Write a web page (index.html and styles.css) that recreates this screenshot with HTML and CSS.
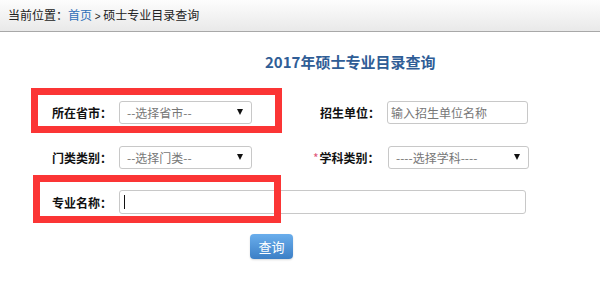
FILE: index.html
```html
<!DOCTYPE html>
<html lang="zh">
<head>
<meta charset="utf-8">
<link rel="stylesheet" href="styles.css">
</head>
<body>
<div class="crumb">当前位置：<span class="link">首页</span> <span class="gt">&gt;</span> 硕士专业目录查询</div>
<h1 class="title">2017年硕士专业目录查询</h1>
<div class="form">
  <div class="row">
    <div class="label">所在省市：</div>
    <div class="select"><span>--选择省市--</span><i class="arrow"></i></div>
    <div class="gap"></div>
    <div class="label">招生单位：</div>
    <div class="input ph">输入招生单位名称</div>
  </div>
  <div class="row">
    <div class="label">门类类别：</div>
    <div class="select"><span>--选择门类--</span><i class="arrow"></i></div>
    <div class="gap"></div>
    <div class="label star-label"><span class="star">*</span>学科类别：</div>
    <div class="select wide"><span>----选择学科----</span><i class="arrow"></i></div>
  </div>
  <div class="row">
    <div class="label">专业名称：</div>
    <div class="input long"><span class="caret"></span></div>
  </div>
  <div class="btnrow"><div class="btn">查询</div></div>
</div>
<div class="mark mark1"></div>
<div class="mark mark2"></div>
</body>
</html>
```
FILE: styles.css
```css
* { box-sizing: border-box; }
html, body { margin: 0; padding: 0; }
body {
  width: 600px; height: 288px; background: #fff; position: relative; overflow: hidden;
  font-family: "Noto Sans CJK SC", "Noto Sans", sans-serif; font-size: 12px; color: #222;
}
.crumb {
  height: 32px; line-height: 30px; padding-left: 8px;
  background: linear-gradient(#fdfdfd, #e9e9e9);
  border-bottom: 1px solid #a8a8a8;
  color: #222; font-size: 12px;
}
.crumb .link { color: #2d6fb8; }
.crumb .gt { font-size: 10px; font-family: "Liberation Sans", sans-serif; }
.title {
  margin: 20px 0 0 265px; font-size: 15px; font-weight: bold; color: #2f5d96;
  line-height: 20px; height: 20px;
}
.form { padding-left: 52px; margin-top: 28px; }
.row { display: flex; align-items: center; height: 24px; margin-bottom: 21px; }
.label { width: 67px; font-weight: bold; font-size: 12px; color: #111; }
.star-label { margin-left: -7px; width: 75px; }
.star { color: #e0567a; font-weight: normal; margin-right: 1px; }
.gap { width: 68px; }
.select {
  width: 133px; height: 23px; border: 1px solid #c8c8c8; border-radius: 3px;
  display: flex; align-items: center; justify-content: space-between;
  padding: 0 8px 0 7px; color: #777; font-size: 12px; background: #fff;
}
.select.wide { width: 141px; }
.arrow {
  width: 0; height: 0; border-left: 3.5px solid transparent; border-right: 3.5px solid transparent;
  border-top: 6px solid #111;
}
.input {
  width: 141px; height: 23px; border: 1px solid #c8c8c8; border-radius: 3px;
  display: flex; align-items: center; padding-left: 3px; font-size: 12px; background: #fff;
}
.ph { color: #777; }
.input.long { width: 407px; height: 24px; }
.caret { width: 1px; height: 14px; background: #111; margin-left: 1px; }
.btnrow { padding-left: 198px; margin-top: -1px; }
.btn {
  width: 43px; height: 25px; border-radius: 4px; color: #fff; font-size: 13px;
  display: flex; align-items: center; justify-content: center;
  background: linear-gradient(#6aaeec, #3c7fc6);
  box-shadow: 0 1px 2px rgba(0,0,0,0.15);
}
.mark { position: absolute; border: 7px solid #fb3535; }
.mark1 { left: 31px; top: 88px; width: 251px; height: 45px; }
.mark2 { left: 33px; top: 175px; width: 248px; height: 48px; }
```
